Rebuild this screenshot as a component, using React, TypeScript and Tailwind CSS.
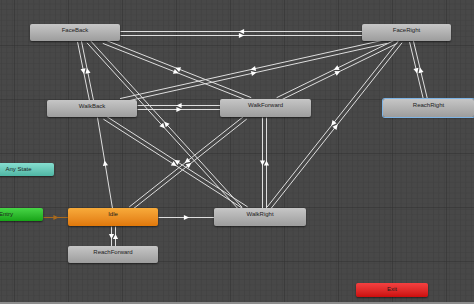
type Kind = 'gray' | 'idle' | 'entry' | 'any' | 'exit' | 'selected'

type StateNode = { label: string; x: number; y: number; w: number; h: number; kind: Kind }

type Pt = [number, number]

const nodes: StateNode[] = [
  { label: 'FaceBack', x: 30, y: 24, w: 90, h: 17, kind: 'gray' },
  { label: 'FaceRight', x: 362, y: 24, w: 89, h: 17, kind: 'gray' },
  { label: 'WalkBack', x: 47, y: 100, w: 90, h: 17, kind: 'gray' },
  { label: 'WalkForward', x: 220, y: 99, w: 91, h: 18, kind: 'gray' },
  { label: 'ReachRight', x: 383, y: 99, w: 91, h: 18, kind: 'selected' },
  { label: 'Any State', x: -17, y: 163, w: 71, h: 13, kind: 'any' },
  { label: 'Entry', x: -31, y: 208, w: 74, h: 13, kind: 'entry' },
  { label: 'Idle', x: 68, y: 208, w: 90, h: 18, kind: 'idle' },
  { label: 'WalkRight', x: 214, y: 208, w: 92, h: 18, kind: 'gray' },
  { label: 'ReachForward', x: 68, y: 246, w: 90, h: 17, kind: 'gray' },
  { label: 'Exit', x: 356, y: 283, w: 72, h: 14, kind: 'exit' },
]

const kindClass: Record<Kind, string> = {
  gray: 'bg-linear-to-b from-[#c6c6c6] to-[#9d9d9d]',
  selected: 'bg-linear-to-b from-[#c6c6c6] to-[#9d9d9d] ring-1 ring-[#7db4e6]',
  idle: 'bg-linear-to-b from-[#f8ab3a] to-[#e07808]',
  entry: 'bg-linear-to-b from-[#46d646] to-[#16a416]',
  any: 'bg-linear-to-b from-[#86ded0] to-[#4fb6a4]',
  exit: 'bg-linear-to-b from-[#f44040] to-[#cc0c0c]',
}

// bidirectional pairs, drawn as two offset lines
const pairs: [Pt, Pt][] = [
  [[120, 33], [362, 33]],
  [[79, 41], [91, 100]],
  [[103, 41], [250, 99]],
  [[88, 41], [240, 208]],
  [[386, 41], [120, 100]],
  [[396, 41], [277, 99]],
  [[400, 41], [268, 208]],
  [[411, 41], [425, 99]],
  [[137, 107], [220, 107]],
  [[104, 117], [246, 208]],
  [[264, 117], [264, 208]],
  [[245, 117], [130, 208]],
  [[113, 226], [113, 246]],
]

function Transition({ from, to, offset = 2, color = '#dedede' }: { from: Pt; to: Pt; offset?: number; color?: string }) {
  const dx = to[0] - from[0]
  const dy = to[1] - from[1]
  const len = Math.hypot(dx, dy)
  const ux = dx / len
  const uy = dy / len
  const nx = -uy
  const ny = ux
  const a: Pt = [from[0] + nx * offset, from[1] + ny * offset]
  const b: Pt = [to[0] + nx * offset, to[1] + ny * offset]
  const mx = (a[0] + b[0]) / 2
  const my = (a[1] + b[1]) / 2
  const s = 2.6
  const tip = `${mx + ux * s},${my + uy * s}`
  const l = `${mx - ux * s + nx * s},${my - uy * s + ny * s}`
  const r = `${mx - ux * s - nx * s},${my - uy * s - ny * s}`

  return (
    <g>
      <line x1={a[0]} y1={a[1]} x2={b[0]} y2={b[1]} stroke={color} strokeWidth={1} />
      <polygon points={`${tip} ${l} ${r}`} fill={color === '#dedede' ? '#ffffff' : color} />
    </g>
  )
}

function Grid() {
  return (
    <defs>
      <pattern id="minor" width="5.4" height="5.4" patternUnits="userSpaceOnUse" x="14" y="45">
        <path d="M 0 0 L 5.4 0 M 0 0 L 0 5.4" stroke="#3f3f3f" strokeWidth="1" fill="none" />
      </pattern>
      <pattern id="major" width="54" height="54" patternUnits="userSpaceOnUse" x="14" y="45">
        <rect width="54" height="54" fill="url(#minor)" />
        <path d="M 0 0 L 54 0 M 0 0 L 0 54" stroke="#2f2f2f" strokeWidth="1" fill="none" />
      </pattern>
    </defs>
  )
}

export default function App() {
  return (
    <div className="w-[474px] h-[304px] flex flex-col overflow-hidden bg-[#484848] font-['Liberation_Sans',Arial,sans-serif]">
      <div className="relative h-[302px] overflow-hidden">
        <svg className="absolute inset-0" width={474} height={302}>
          <Grid />
          <rect width="474" height="302" fill="url(#major)" />
          <g transform="translate(0.5,0.5)">
            {pairs.map(([p, q], i) => (
              <g key={i}>
                <Transition from={p} to={q} />
                <Transition from={q} to={p} />
              </g>
            ))}
            <Transition from={[112, 208]} to={[97, 117]} offset={0} />
            <Transition from={[158, 217]} to={[214, 217]} offset={0} />
            <Transition from={[43, 217]} to={[68, 217]} offset={0} color="#a8691c" />
          </g>
        </svg>

        {nodes.map((n) => (
          <div
            key={n.label}
            className={`absolute flex justify-center pt-[3px] rounded-[2px] shadow-[0_1px_2px_rgba(0,0,0,0.55)] ${kindClass[n.kind]}`}
            style={{ left: n.x, top: n.y, width: n.w, height: n.h }}
          >
            <span className="text-[6px] leading-[6px] text-[#1c1c1c]">{n.label}</span>
          </div>
        ))}
      </div>
      <div className="h-[2px] bg-[#8c8c8c]" />
    </div>
  )
}
